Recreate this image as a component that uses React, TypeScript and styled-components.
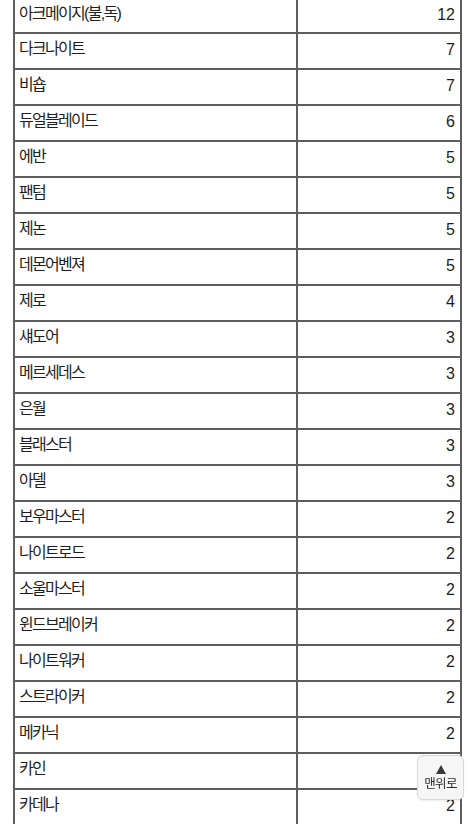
import React from "react";
import styled, { createGlobalStyle } from "styled-components";

const GlobalStyle = createGlobalStyle`
  html, body {
    margin: 0;
    padding: 0;
    background: #ffffff;
  }
  body {
    font-family: "Liberation Sans", "Noto Sans CJK KR", sans-serif;
    color: #1e1e1e;
  }
`;

const Page = styled.div`
  padding-left: 13px;
  width: 449px;
`;

const Table = styled.div`
  display: flex;
  flex-direction: column;
  border-left: 2px solid #5e5e5e;
  border-right: 2px solid #5e5e5e;
`;

const Row = styled.div<{ $first?: boolean }>`
  display: grid;
  grid-template-columns: 283px 1fr;
  height: ${(p) => (p.$first ? "32px" : "34px")};
  border-bottom: 2px solid #5e5e5e;
`;

const NameCell = styled.div`
  display: flex;
  align-items: center;
  padding-left: 4px;
  padding-bottom: 5px;
  box-sizing: border-box;
  border-right: 2px solid #5e5e5e;
  font-size: 16px;
  line-height: 1;
  letter-spacing: -1.7px;
  white-space: nowrap;
`;

const CountCell = styled.div`
  display: flex;
  align-items: center;
  justify-content: flex-end;
  padding-right: 5px;
  padding-bottom: 3px;
  box-sizing: border-box;
  font-size: 16px;
  line-height: 1;
`;

const TopButton = styled.button`
  position: fixed;
  right: 10px;
  bottom: 24px;
  width: 47px;
  height: 45px;
  display: flex;
  flex-direction: column;
  align-items: center;
  justify-content: center;
  gap: 3px;
  padding: 0;
  background: #f6f6f6;
  border: 1px solid #d8d8d8;
  border-radius: 6px;
  color: #2a2a2a;
  font-family: "Noto Sans CJK KR", sans-serif;
  font-size: 12.5px;
  line-height: 1;
  letter-spacing: -0.6px;
  box-shadow: 0 1px 2px rgba(0, 0, 0, 0.08);
  cursor: pointer;
`;

const Triangle = styled.span`
  width: 0;
  height: 0;
  border-left: 5px solid transparent;
  border-right: 5px solid transparent;
  border-bottom: 9px solid #3a3a3a;
`;

const rows: [string, number][] = [
  ["아크메이지(불,독)", 12],
  ["다크나이트", 7],
  ["비숍", 7],
  ["듀얼블레이드", 6],
  ["에반", 5],
  ["팬텀", 5],
  ["제논", 5],
  ["데몬어벤져", 5],
  ["제로", 4],
  ["섀도어", 3],
  ["메르세데스", 3],
  ["은월", 3],
  ["블래스터", 3],
  ["아델", 3],
  ["보우마스터", 2],
  ["나이트로드", 2],
  ["소울마스터", 2],
  ["윈드브레이커", 2],
  ["나이트워커", 2],
  ["스트라이커", 2],
  ["메카닉", 2],
  ["카인", 2],
  ["카데나", 2],
];

export default function App() {
  return (
    <>
      <GlobalStyle />
      <Page>
        <Table>
          {rows.map(([name, count], i) => (
            <Row key={name} $first={i === 0}>
              <NameCell>{name}</NameCell>
              <CountCell>{count}</CountCell>
            </Row>
          ))}
        </Table>
      </Page>
      <TopButton type="button">
        <Triangle />
        <span>맨위로</span>
      </TopButton>
    </>
  );
}
